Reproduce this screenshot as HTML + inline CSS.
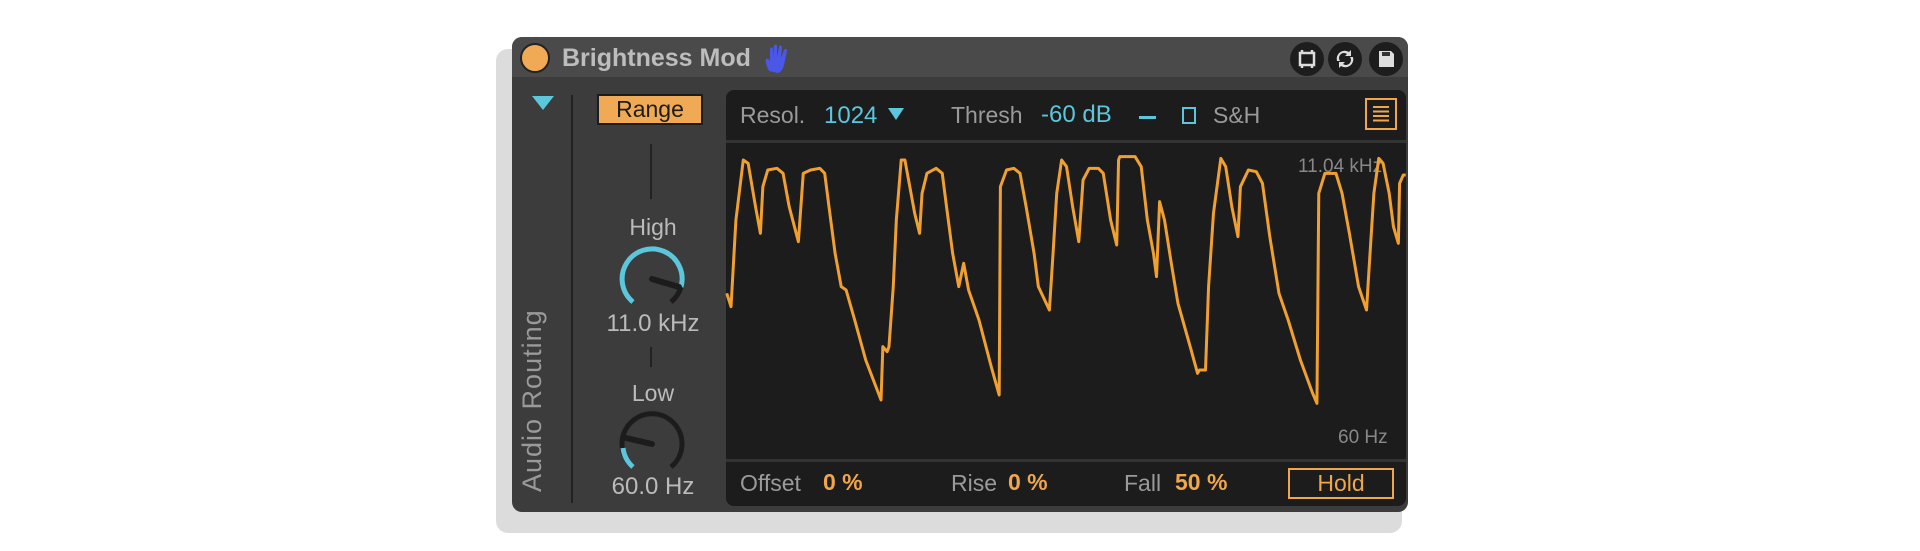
<!DOCTYPE html>
<html><head><meta charset="utf-8"><style>
body{margin:0;width:1920px;height:551px;background:#fff;position:relative;overflow:hidden;font-family:"Liberation Sans",sans-serif}
.a{position:absolute}
.t{position:absolute;white-space:nowrap;font-size:23px;line-height:1}
.g{color:#9a9a9a}.c{color:#5cc6dc}.o{color:#f0a64a;font-weight:bold}
</style></head><body>
<div class="a" style="left:496px;top:49px;width:906px;height:484px;background:#dcdcdc;border-radius:12px"></div>
<div class="a" style="left:512px;top:37px;width:896px;height:475px;background:#3c3c3c;border-radius:10px;overflow:hidden">
 <div class="a" style="left:0;top:0;width:896px;height:40px;background:#4a4a4a"></div>
</div>
<div class="a" style="left:520px;top:43px;width:30px;height:30px;border-radius:50%;background:#f0aa55;border:2px solid #222;box-sizing:border-box"></div>
<div class="t" style="left:562px;top:46px;font-size:25px;font-weight:bold;color:#bdbdbd">Brightness Mod</div>
<svg class="a" style="left:763px;top:43px" width="28" height="32" viewBox="0 0 28 32"><path d="M6 28 C3 22 2 18 3 16 C4 15 6 16 7 18 L7 6 C7 4 10 4 10 6 L10 14 L11 3 C11 1 14 1 14 3 L14 14 L16 4 C16 2 19 2 19 4 L18 15 L21 7 C22 5 25 6 24 8 L21 22 C20 26 18 29 15 30 Z" fill="#4b57e6"/></svg>
<svg class="a" style="left:1286px;top:40px" width="120" height="38" viewBox="-2 -2 120 38">
<circle cx="19" cy="17" r="17" fill="#1d1d1d"/><circle cx="57" cy="17" r="17" fill="#1d1d1d"/><circle cx="98" cy="17" r="17" fill="#1d1d1d"/>
<rect x="12" y="11" width="14" height="12" fill="none" stroke="#ddd" stroke-width="2.5"/><path d="M14 8v3M24 8v3M14 23v3M24 23v3" stroke="#ddd" stroke-width="2.5"/>
<path d="M49 19a8 8 0 0 1 12-9l2-2v6h-6l2-2a5 5 0 0 0-7 7zM65 15a8 8 0 0 1-12 9l-2 2v-6h6l-2 2a5 5 0 0 0 7-7z" fill="#ddd"/>
<path d="M91 9h12l3 3v13h-15z" fill="#ddd"/><rect x="94" y="10" width="8" height="4" fill="#333"/>
</svg>
<svg class="a" style="left:532px;top:96px" width="22" height="16"><path d="M0 0h22L11 14z" fill="#5cc6dc"/></svg>
<div class="a" style="left:571px;top:95px;width:2px;height:408px;background:#222"></div>
<div class="t" style="left:519px;top:492px;transform:rotate(-90deg);transform-origin:0 0;font-size:27px;color:#9a9a9a;letter-spacing:1px">Audio Routing</div>
<div class="a" style="left:597px;top:94px;width:106px;height:31px;background:#f0aa55;border:2px solid #1c1c1c;box-sizing:border-box"></div>
<div class="t" style="left:597px;top:98px;width:106px;text-align:center;font-size:23px;color:#1c1c1c">Range</div>
<div class="a" style="left:650px;top:144px;width:2px;height:55px;background:#222"></div>
<div class="t" style="left:600px;top:216px;width:106px;text-align:center;font-size:23px;color:#bbb">High</div>
<svg class="a" style="left:616px;top:243px" width="72" height="72" viewBox="-36 -36 72 72">
<path d="M-19 23A30 30 0 1 1 29 8" fill="none" stroke="#5cc6dc" stroke-width="5"/>
<path d="M29 8A30 30 0 0 1 19 23" fill="none" stroke="#1c1c1c" stroke-width="5"/>
<path d="M0 0L27 8" stroke="#1c1c1c" stroke-width="6" stroke-linecap="round"/></svg>
<div class="t" style="left:593px;top:312px;width:120px;text-align:center;font-size:24px;color:#bbb">11.0 kHz</div>
<div class="a" style="left:650px;top:347px;width:2px;height:20px;background:#222"></div>
<div class="t" style="left:600px;top:382px;width:106px;text-align:center;font-size:23px;color:#bbb">Low</div>
<svg class="a" style="left:616px;top:408px" width="72" height="72" viewBox="-36 -36 72 72">
<path d="M-19 23A30 30 0 1 1 19 23" fill="none" stroke="#1c1c1c" stroke-width="5"/>
<path d="M-19 23A30 30 0 0 1 -29 4" fill="none" stroke="#5cc6dc" stroke-width="5"/>
<path d="M0 0L-26 -6" stroke="#1c1c1c" stroke-width="6" stroke-linecap="round"/></svg>
<div class="t" style="left:593px;top:475px;width:120px;text-align:center;font-size:24px;color:#bbb">60.0 Hz</div>
<div class="a" style="left:726px;top:90px;width:680px;height:416px;background:#1c1c1c;border-radius:8px"></div>
<div class="a" style="left:726px;top:140px;width:680px;height:3px;background:#333"></div>
<div class="a" style="left:726px;top:459px;width:680px;height:3px;background:#333"></div>
<div class="t g" style="left:740px;top:104px">Resol.</div>
<div class="t c" style="left:824px;top:104px;font-size:24px">1024</div>
<svg class="a" style="left:888px;top:108px" width="16" height="13"><path d="M0 0h16L8 12z" fill="#5cc6dc"/></svg>
<div class="t g" style="left:951px;top:104px">Thresh</div>
<div class="t c" style="left:1041px;top:103px;font-size:24px">-60 dB</div>
<div class="a" style="left:1139px;top:116px;width:17px;height:3px;background:#5cc6dc"></div>
<div class="a" style="left:1182px;top:107px;width:14px;height:17px;border:2px solid #5cc6dc;box-sizing:border-box"></div>
<div class="t g" style="left:1213px;top:104px">S&amp;H</div>
<div class="a" style="left:1365px;top:98px;width:32px;height:32px;border:2px solid #f0a64a;box-sizing:border-box"></div>
<svg class="a" style="left:1371px;top:104px" width="20" height="20"><path d="M2 3h16M2 7.5h16M2 12h16M2 16.5h16" stroke="#f0a64a" stroke-width="2"/></svg>
<div class="t" style="left:1298px;top:157px;font-size:19px;color:#888">11.04 kHz</div>
<div class="t" style="left:1338px;top:428px;font-size:19px;color:#888">60 Hz</div>
<svg class="a" style="left:480px;top:20px" width="960" height="520" viewBox="0 0 1568 1560" preserveAspectRatio="none">
<polyline fill="none" stroke="#f0a030" stroke-width="3" vector-effect="non-scaling-stroke" stroke-linejoin="round" points="403,820 410,860 418,600 430,420 438,430 450,560 458,640 462,500 470,450 485,445 495,460 505,560 520,665 528,460 540,450 555,445 563,460 570,560 580,700 590,800 598,810 612,900 630,1020 655,1140 658,980 665,995 668,980 675,800 680,600 688,420 694,420 700,480 710,580 718,640 722,520 730,460 745,445 755,460 762,560 772,700 782,800 790,730 798,810 815,900 835,1040 848,1125 850,500 860,450 872,445 882,460 892,560 905,700 912,800 930,870 936,700 942,520 950,420 958,440 968,560 978,665 985,480 995,445 1010,445 1018,460 1030,600 1040,675 1043,420 1045,410 1070,410 1080,440 1090,600 1100,700 1105,770 1110,545 1118,600 1130,740 1140,850 1160,980 1172,1060 1175,1050 1185,1050 1190,800 1198,580 1210,415 1218,440 1228,560 1238,650 1242,500 1255,450 1268,455 1278,490 1290,650 1305,820 1320,900 1340,1020 1360,1120 1367,1150 1370,520 1380,460 1398,460 1408,520 1420,640 1435,800 1448,870 1452,750 1460,520 1468,415 1475,430 1485,520 1492,620 1500,670 1502,490 1508,465 1512,465"/>
</svg>
<div class="t g" style="left:740px;top:472px">Offset</div>
<div class="t o" style="left:823px;top:471px">0 %</div>
<div class="t g" style="left:951px;top:472px">Rise</div>
<div class="t o" style="left:1008px;top:471px">0 %</div>
<div class="t g" style="left:1124px;top:472px">Fall</div>
<div class="t o" style="left:1175px;top:471px">50 %</div>
<div class="a" style="left:1288px;top:468px;width:106px;height:31px;border:2px solid #f0a64a;box-sizing:border-box"></div>
<div class="t" style="left:1288px;top:472px;width:106px;text-align:center;color:#f0a64a;font-size:23px">Hold</div>
</body></html>
